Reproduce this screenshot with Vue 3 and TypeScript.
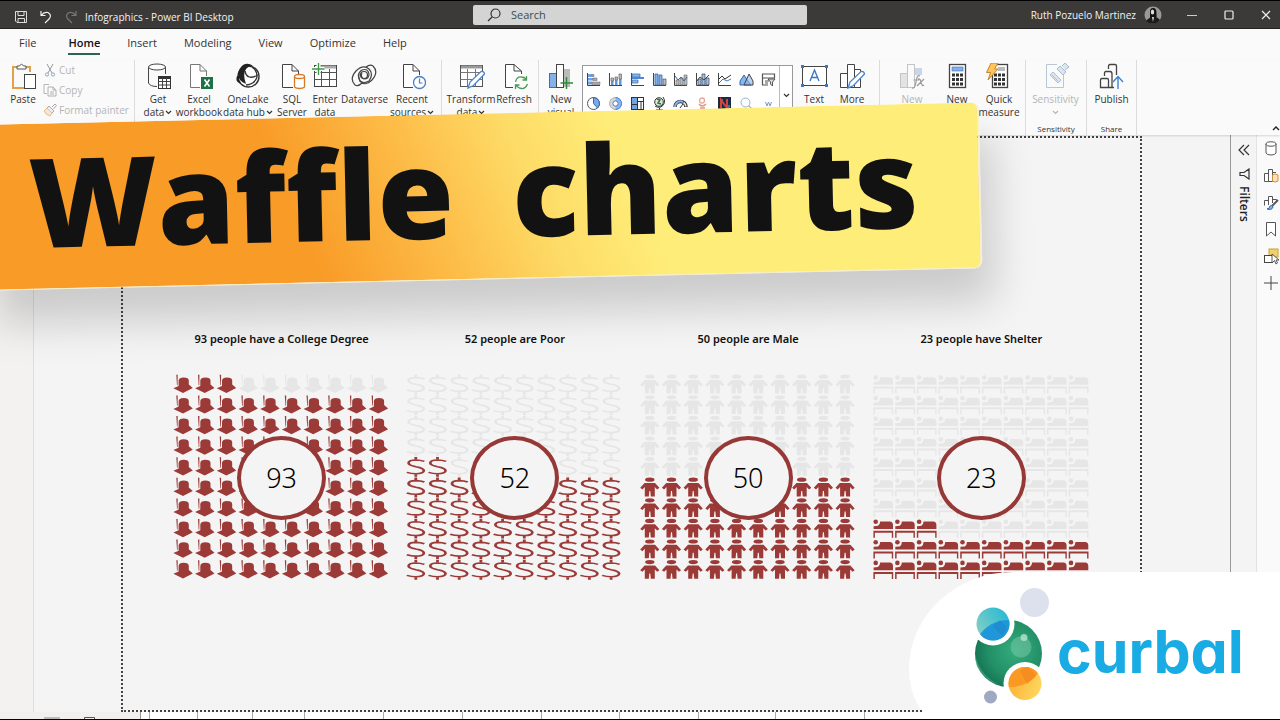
<script setup lang="ts">
interface RibbonItem {
  id: string
  icon: string
  lines: string[]
  width: number
  menu?: boolean
  disabled?: boolean
}
interface Chart {
  title: string
  value: number
  glyph: string
}

const tabs = ['File', 'Home', 'Insert', 'Modeling', 'View', 'Optimize', 'Help']

const icons: Record<string, string> = {
  paste: '<path d="M7 4H3V25H14" fill="none" stroke="#e2a04a" stroke-width="2"/><path d="M15 4H20V9" fill="none" stroke="#e2a04a" stroke-width="2"/><path d="M7 6V3H9.500Q11.500-.5 13.500 3H16V6Z" fill="#fff" stroke="#555"/><rect x="14.500" y="11.500" width="11" height="14" fill="#fff" stroke="#444"/>',
  getdata: '<path d="M3.500 4V20Q5 23.500 12 23.500M20.500 4V11" fill="none" stroke="#444"/><ellipse cx="12" cy="4" rx="8.500" ry="3" fill="#fff" stroke="#444"/><rect x="13.500" y="13.500" width="12" height="12" fill="#fff" stroke="#333"/><path d="M13.500 15H25.500" stroke="#333" stroke-width="2"/><path d="M13.500 18.500H25.500M13.500 22H25.500M17.500 15V25M21.500 15V25" stroke="#444"/>',
  excel: '<path d="M14 24.500H4.500V1.500H14L20.500 8V13M14 1.500V8H20.500" fill="#fff" stroke="#777"/><rect x="15" y="14" width="12" height="12" fill="#1e7145"/><path d="M18.500 16.500L23.500 23.500M23.500 16.500L18.500 23.500" stroke="#fff" stroke-width="1.600"/>',
  onelake: '<circle cx="13.500" cy="13.500" r="10.500" fill="#fff" stroke="#333" stroke-width="1.400"/><path d="M8 2Q13-1 18 3Q12 3 10 8Q8 13 11 21Q3 18 3 11Q4 5 8 2Z" fill="#222"/><path d="M2 13Q0 18 4 20L6 21Q3 17 4 13Z" fill="#222"/><path d="M10 8Q12 18 23 12M17 4Q22 7 22 14Q20 21 11 22" fill="none" stroke="#333" stroke-width="1.300"/>',
  sql: '<path d="M14 24.500H3.500V1.500H13L19.500 8V11M13 1.500V8H19.500" fill="#fff" stroke="#444"/><path d="M15.500 14V24Q17 25.500 20.500 25.500Q24 25.500 25.500 24V14" fill="#fff" stroke="#d77a28" stroke-width="1.300"/><ellipse cx="20.500" cy="13.500" rx="5" ry="2" fill="#fff" stroke="#d77a28" stroke-width="1.300"/>',
  enter: '<rect x="2.500" y="2.500" width="22" height="21" fill="#fff" stroke="#444"/><path d="M8 4H24" stroke="#aaa" stroke-width="3"/><path d="M2.500 9.500H24.500M2.500 16.500H24.500M9.500 6V23.500M17.500 6V23.500" stroke="#555"/><path d="M6.500 0V12M0 6H12.500" stroke="#fafafa" stroke-width="4"/><path d="M6.500 0V12M0 6H12.500" stroke="#3f9b4b" stroke-width="1.300"/>',
  dataverse: '<g fill="none" stroke="#444" stroke-width="1.200"><path d="M22 3Q28 9 21 17Q14 24 9 18Q5 11 11 7Q17 5 18 11Q18 16 13 16Q9 14 11 10"/><path d="M4 22Q-2 16 5 8Q12 1 18 6Q23 11 18 18Q13 21 9 18Q7 14 8 11"/><path d="M22 3Q19 1 15 4M4 22Q7 24 11 20"/><circle cx="13" cy="12" r="3.500"/></g>',
  recent: '<path d="M14 24.500H4.500V1.500H14L20.500 8V12M14 1.500V8H20.500" fill="#fff" stroke="#444"/><circle cx="20.500" cy="19.500" r="6" fill="#fff" stroke="#4a7fc1" stroke-width="1.300"/><path d="M20.500 15.500V20H23.500" fill="none" stroke="#4a7fc1" stroke-width="1.200"/>',
  transform: '<rect x="2.500" y="2.500" width="22" height="21" fill="#fff" stroke="#555"/><path d="M3 4H24" stroke="#999" stroke-width="3"/><path d="M2.500 9.500H24.500M2.500 16.500H24.500M9.500 6V23.500M17.500 6V23.500" stroke="#777"/><path d="M10 25L12 19L23 8.500Q26 8 26.500 11L15.500 22.500Z" fill="#fff" stroke="#4a84cc" stroke-width="1.300"/>',
  refresh: '<path d="M12 24.500H4.500V1.500H13L20.500 8V11M13 1.500V8H20.500" fill="#fff" stroke="#444"/><g transform="translate(1.500 0)" fill="none" stroke="#4c9b55" stroke-width="1.300"><path d="M13 19Q14 13.500 19 14Q22 14 24 17M24 13V17H20M25 21Q23 26 19 25.500Q15 25 13.500 22M13 26V22H17"/></g>',
  newvisual: '<rect x="1.500" y="10.500" width="7" height="14" fill="#85b1ea" stroke="#3a6db5"/><rect x="15" y="6" width="7" height="18" fill="#bbb"/><rect x="8.500" y="1.500" width="7" height="23" fill="#fff" stroke="#444"/><path d="M18.500 14V26M12.500 20H25" stroke="#2f8a3c" stroke-width="1.500"/>',
  text: '<rect x="1.500" y="3.500" width="24" height="19" fill="#fff" stroke="#444"/><path d="M9 18L13.500 7L18 18M10.500 14.500H16.500" fill="none" stroke="#3a78c4" stroke-width="1.400"/><path d="M0 2h3v3H0zM24 2h3v3H24zM0 21h3v3H0zM24 21h3v3H24z" fill="#3a78c4"/>',
  more: '<path d="M1.500 10.500H8.500V24.500H1.500ZM8.500 1.500H15.500V24.500H8.500ZM15.500 6.500H21.500V24.500H15.500Z" fill="#fff" stroke="#444"/><path d="M9 25L11 19L22 8.500Q25 8 25.500 11L14.500 22.500Z" fill="#fff" stroke="#4a84cc" stroke-width="1.300"/>',
  measurefx: '<rect x="1.500" y="10.500" width="7" height="14" fill="#e3e3e3" stroke="#c4c4c4"/><rect x="15" y="5" width="8" height="7" fill="#c8d6e8"/><rect x="8.500" y="1.500" width="7" height="23" fill="#fafafa" stroke="#c4c4c4"/><path d="M13 25Q16 26 17 19Q18 11 21 13M14.500 17H20M19 16Q21 15 22 19Q23 24 25 22M25 16L18 23" fill="none" stroke="#999" stroke-width="1.200"/>',
  calc: '<rect x="5.500" y="1.500" width="16" height="23" fill="#fff" stroke="#444" stroke-width="1.300"/><rect x="8" y="4" width="11" height="4" fill="#85b1ea" stroke="#3a6db5" stroke-width=".6"/><path d="M8 10.500h3v3H8zM12 10.500h3v3h-3zM16 10.500h3v3h-3zM8 15h3v3H8zM12 15h3v3h-3zM16 15h3v3h-3zM8 19.500h3v3H8zM12 19.500h3v3h-3zM16 19.500h3v3h-3z" fill="#333"/>',
  quick: '<rect x="6.500" y="1.500" width="15" height="23" fill="#fff" stroke="#444" stroke-width="1.300"/><rect x="12" y="4" width="7" height="4" fill="#bbb"/><path d="M8 10.500h3v3H8zM12 10.500h3v3h-3zM16 10.500h3v3h-3zM8 15h3v3H8zM12 15h3v3h-3zM16 15h3v3h-3zM8 19.500h3v3H8zM12 19.500h3v3h-3zM16 19.500h3v3h-3z" fill="#333"/><path d="M5 0H12L8.500 6H12L2 17L4.500 9.500H.5Z" fill="#ffc45c" stroke="#c9822a"/>',
  sensitivity: '<path d="M15 1.500H4.500V24.500H21.500V12" fill="none" stroke="#b9c6d4"/><path d="M8 12L11 9L19 17L16 20Z" fill="#dce4ee" stroke="#b0bfd0"/><path d="M15 6L18 3L24 9L21 12ZM20 3L23 0L27 4L23 7" fill="#dce4ee" stroke="#a9bbd0"/><path d="M10 12L16 18" stroke="#b0bfd0"/>',
  publish: '<path d="M10.500 6V3Q10.500 1.500 12 1.500H17Q18.500 1.500 18.500 3V12M14 14V11Q14 8.500 12 8.500H8Q6.500 8.500 6.500 10V13M2.500 17Q2.500 15.500 4 15.500H9Q10.500 15.500 10.500 17V24.500H2.500ZM10.500 24.500H16M14 14V24" fill="none" stroke="#444" stroke-width="1.300"/><path d="M20 26V14M15 19L20 13.500L25 19" fill="none" stroke="#3f83cc" stroke-width="1.400"/>',
  cut: '<path d="M4 1L9 10M10 1L5 10" fill="none" stroke="#9a9a9a"/><circle cx="4" cy="11.500" r="1.600" fill="none" stroke="#8fa8c4"/><circle cx="10" cy="11.500" r="1.600" fill="none" stroke="#8fa8c4"/>',
  copy: '<path d="M4 10.500H1V1.500H6" fill="none" stroke="#b5b5b5"/><path d="M5 4H10L13 7V13H5ZM10 4V7H13M7 9H11M7 11H11" fill="none" stroke="#b0b0b0"/>',
  brush: '<path d="M9 4L12 1L13.500 2.500L10.500 6" fill="none" stroke="#a8a8a8"/><path d="M6 3L11 8L9 10L4 5Z" fill="#eee" stroke="#aaa"/><path d="M4 5L1 8Q3 12 7 13L9 10" fill="#f9e5cc" stroke="#e2bb8c"/>',
}

const dataItems: RibbonItem[] = [
  { id: 'get', icon: 'getdata', lines: ['Get', 'data'], width: 38, menu: true },
  { id: 'excel', icon: 'excel', lines: ['Excel', 'workbook'], width: 44 },
  { id: 'onelake', icon: 'onelake', lines: ['OneLake', 'data hub'], width: 54, menu: true },
  { id: 'sql', icon: 'sql', lines: ['SQL', 'Server'], width: 34 },
  { id: 'enter', icon: 'enter', lines: ['Enter', 'data'], width: 32 },
  { id: 'dataverse', icon: 'dataverse', lines: ['Dataverse'], width: 47 },
  { id: 'recent', icon: 'recent', lines: ['Recent', 'sources'], width: 48, menu: true },
]
const queryItems: RibbonItem[] = [
  { id: 'transform', icon: 'transform', lines: ['Transform', 'data'], width: 52, menu: true },
  { id: 'refresh', icon: 'refresh', lines: ['Refresh'], width: 34 },
]
const calcItems: RibbonItem[] = [
  { id: 'visualcalc', icon: 'measurefx', lines: ['New'], width: 40, disabled: true },
  { id: 'measure', icon: 'calc', lines: ['New', 'measure'], width: 50 },
  { id: 'quick', icon: 'quick', lines: ['Quick', 'measure'], width: 34 },
]
const insertItems: RibbonItem[] = [
  { id: 'text', icon: 'text', lines: ['Text', 'box'], width: 42 },
  { id: 'more', icon: 'more', lines: ['More', 'visuals'], width: 34 },
]
const newVisual: RibbonItem[] = [
  { id: 'newvisual', icon: 'newvisual', lines: ['New', 'visual'], width: 42 },
]
const pasteItem: RibbonItem[] = [{ id: 'paste', icon: 'paste', lines: ['Paste'], width: 36 }]
const sensitivityItem: RibbonItem[] = [
  { id: 'sens', icon: 'sensitivity', lines: ['Sensitivity', ''], width: 59, menu: true, disabled: true },
]
const publishItem: RibbonItem[] = [{ id: 'publish', icon: 'publish', lines: ['Publish'], width: 49 }]

interface Group {
  id: string
  items: RibbonItem[]
  caption?: string
  clipboard?: boolean
  gallery?: boolean
  after?: RibbonItem[]
}
const groups: Group[] = [
  { id: 'clipboard', items: pasteItem, clipboard: true },
  { id: 'data', items: dataItems },
  { id: 'queries', items: queryItems },
  { id: 'insert', items: newVisual, gallery: true, after: insertItems },
  { id: 'calc', items: calcItems },
  { id: 'sensitivity', items: sensitivityItem, caption: 'Sensitivity' },
  { id: 'share', items: publishItem, caption: 'Share' },
]
const clipActions = [
  { icon: 'cut', label: 'Cut' },
  { icon: 'copy', label: 'Copy' },
  { icon: 'brush', label: 'Format painter' },
]

const axis = '<path d="M1.500 1V13.500H14" fill="none" stroke="#444"/>'
const gallery: { name: string; art: string }[] = [
  { name: 'Stacked bar', art: axis + '<path d="M2 2h4v3H2zM2 9.500h4v3H2zM2 6h5v2.500H2z" fill="#6ea3e6"/><path d="M6 2.500h2v2H6zM7 6h4v2.500H7zM6 10h8v2.500H6z" fill="#aaa" stroke="#666" stroke-width=".5"/>' },
  { name: 'Stacked column', art: axis + '<path d="M3 9h2.500v4H3zM7 8h2.500v5H7zM11 7h2.500v6h-2.500z" fill="#5f98e0"/><path d="M3 6h2.500v3H3zM7 5h2.500v3H7zM11 2h2.500v5h-2.500z" fill="#bbb" stroke="#555" stroke-width=".6"/>' },
  { name: 'Clustered bar', art: axis + '<path d="M2 2h8v3H2zM2 8h6v3H2z" fill="#8ab6ee" stroke="#3568ac" stroke-width=".7"/><path d="M2 5h12v2H2z" fill="#4f87d0"/>' },
  { name: 'Clustered column', art: axis + '<path d="M3 2h3v11H3zM7 3h3v10H7z" fill="#85b1ea" stroke="#3568ac" stroke-width=".8"/><path d="M11 7h3v6h-3z" fill="#bbb" stroke="#555" stroke-width=".7"/>' },
  { name: 'Line and stacked column', art: axis + '<path d="M3 8h3v5H3zM7 6h3v7H7zM11 3h3v10h-3z" fill="#bbb" stroke="#666" stroke-width=".6"/><path d="M2 4L5 8L8 5L11 9L14 5" fill="none" stroke="#3568ac"/>' },
  { name: 'Line and clustered column', art: axis + '<path d="M3 7h3v6H3zM7 2h3v11H7zM11 6h3v7h-3z" fill="#9fc0eb" stroke="#444" stroke-width=".7"/><path d="M2 9L5 5L9 8L14 3" fill="none" stroke="#444"/>' },
  { name: 'Line', art: axis + '<path d="M2 7L5 4L8 7L14 3" fill="none" stroke="#333"/><path d="M2 11L6 7L10 9L14 7" fill="none" stroke="#3f7ccc"/>' },
  { name: 'Area', art: '<path d="M1 13V9L5 3L9 9L12 13Z" fill="#8ab6ee" stroke="#3568ac"/><path d="M5 13L10 2L14 9V13Z" fill="#8ab6ee" stroke="#444" fill-opacity=".6"/>' },
  { name: 'Slicer', art: '<path d="M1.500 2H13.500V6H1.500ZM1.500 6V13H7M4 9H8M4 11H7" fill="none" stroke="#555" stroke-width="1.200"/><path d="M7 7H14L11.500 10V14L9.500 12V10Z" fill="#ddd" stroke="#333" stroke-width=".8"/>' },
  { name: 'Pie', art: '<circle cx="7.500" cy="7.500" r="6" fill="#fff" stroke="#555"/><path d="M7.500 7.500V1.500A6 6 0 0 1 11.500 12Z" fill="#78a9e8" stroke="#3568ac"/>' },
  { name: 'Donut', art: '<circle cx="7.500" cy="7.500" r="6" fill="#d6d6d6" stroke="#999" stroke-width=".7"/><path d="M7.500 1.500A6 6 0 0 1 7.500 13.500" fill="#8ab6ee" stroke="#4b82cb"/><circle cx="7.500" cy="7.500" r="2.600" fill="#fff" stroke="#4b82cb"/>' },
  { name: 'Treemap', art: '<rect x="1.500" y="1.500" width="12" height="12" fill="#fff" stroke="#333"/><path d="M2 2h5v6H2zM2 9h5v4H2z" fill="#6ea3e6"/><path d="M7.500 1.500V13.500M1.500 8.500H7.500M7.500 5.500H13.500M11 5.500V13.500" stroke="#333"/>' },
  { name: 'Map', art: '<circle cx="7" cy="6" r="4.300" fill="#dfe9df" stroke="#333"/><path d="M5 3L8 4L6 7L9 8" fill="none" stroke="#2f7a3c" stroke-width="1.500"/><path d="M11 1Q15 7 9 11Q5 12 3 10M7.500 12V14M4 14H11" fill="none" stroke="#333"/>' },
  { name: 'Gauge', art: '<path d="M2 11A5.500 5.500 0 0 1 13 11" fill="none" stroke="#333" stroke-width="3.500"/><path d="M2 11A5.500 5.500 0 0 1 10 6" fill="none" stroke="#8ab6ee" stroke-width="2"/><path d="M10.500 6.500A5.500 5.500 0 0 1 13 10.500" fill="none" stroke="#eee" stroke-width="1.500"/><path d="M7 12L10 8" stroke="#333"/>' },
  { name: 'Card', art: '<circle cx="7" cy="4.500" r="2.500" fill="none" stroke="#e8a89a" stroke-width="1.300"/><path d="M4 8Q7 12 11 8M5 12H10" fill="none" stroke="#e69080" stroke-width="1.300"/>' },
  { name: 'Matrix', art: '<rect x="1" y="1" width="13" height="13" fill="#1c2a44"/><path d="M3 3h3v3H3zM9 9h4v3H9z" fill="#3f6db0"/><path d="M4 12V4L10 12V3" fill="none" stroke="#d6453c" stroke-width="2"/>' },
  { name: 'Search visual', art: '<circle cx="6.500" cy="6.500" r="4.500" fill="none" stroke="#8fb5d8"/><path d="M9.500 9.500L13 13" stroke="#8fb5d8" stroke-width="1.300"/>' },
  { name: 'Word visual', art: '<path d="M4.500 6L6 10L7.500 6L9 10L10.500 6" fill="none" stroke="#7d9cc4"/>' },
]

const glyphs: Record<string, string> = {
  hat: '<path d="M3.300 .8H4.700L4.600 11L4 11.500Z"/><path d="M5.600 12V6.500Q6 3.400 10.600 3.400Q15.800 3.400 15.800 6.500V10.500L19.800 14L10 19L.4 14.300Z"/>',
  dollar: '<path d="M8.400 .6H11.200V3.200H8.400ZM8.400 17.800H11.200V20.400H8.400Z"/><g transform="scale(1.700 1)" fill="none" stroke="currentColor"><path d="M10.800 5Q8.500 3.600 5.800 3.600Q1.500 3.700 1.500 6.600Q1.600 9 5.800 10.300Q10.500 11.600 10.500 14.400Q10.300 17.300 5.800 17.300Q3 17.300 .5 16" stroke-width="1.600"/></g>',
  man: '<ellipse cx="9.800" cy="2.700" rx="4.700" ry="2.100"/><path d="M4.600 6H15L19.400 10.800L17.200 12.400L14.800 10V19.400H10.800L10.300 14H9.300L8.800 19.400H4.800V10L2.400 12.400L.2 10.800Z"/>',
  bed: '<circle cx="2.700" cy="3.500" r="2.300"/><path d="M7.200 3.200H16.800Q20 3.400 20 6.500V10.800H.6V8L5 7.600Q7 6.500 7.200 3.200Z"/><path d="M.4 19.600V12.600H20.200V19.600H18.800V14.600H1.900V19.600Z"/>',
}
const charts: Chart[] = [
  { title: '93 people have a College Degree', value: 93, glyph: 'hat' },
  { title: '52 people are Poor', value: 52, glyph: 'dollar' },
  { title: '50 people are Male', value: 50, glyph: 'man' },
  { title: '23 people have Shelter', value: 23, glyph: 'bed' },
]
const cells = Array.from({ length: 100 }, (_, i) => {
  const row = Math.floor(i / 10)
  const col = i % 10
  return { row, col, rank: (9 - row) * 10 + col, place: `translate(${col * 21.7} ${row * 20.6})` }
})

const panes = [
  { name: 'Data', art: '<path d="M3 4V13Q4 15 8 15Q12 15 13 13V4" fill="#fff" stroke="#555"/><ellipse cx="8" cy="4" rx="5" ry="2.200" fill="#fff" stroke="#555"/>' },
  { name: 'Build', art: '<path d="M1.500 6.500H5.500V14.500H1.500ZM5.500 2.500H9.500V14.500H5.500ZM9.500 5.500H13" fill="#fff" stroke="#555"/><path d="M9.500 8V14Q12 16 15 14V8Q12 6 9.500 8Z" fill="#ffe2b5" stroke="#cf8e3d"/>' },
  { name: 'Format', art: '<path d="M1.500 11.500V6.500H5.500V11M5.500 10V2.500H9.500V9M9.500 5.500H13.500V7" fill="#fff" stroke="#555"/><path d="M15 6L9 12" stroke="#555" stroke-width="1.800"/><path d="M4 15Q7 15 6.500 12.500Q9 10 10 13Q9 16.500 4 15Z" fill="#85b1ea" stroke="#3568ac"/>' },
  { name: 'Bookmarks', art: '<path d="M3.500 1.500H12.500V15L8 11L3.500 15Z" fill="#fff" stroke="#555"/>' },
  { name: 'Selection', art: '<rect x="6" y="1" width="9" height="8" fill="#f3cf6b" stroke="#c9a03a"/><rect x="1.500" y="7.500" width="8" height="7" fill="#fff" stroke="#444"/><path d="M9 6V15L11.500 12.500L13 16L14.500 15L13 12H16Z" fill="#fff" stroke="#444" stroke-width=".9"/>' },
  { name: 'Add pane', art: '<path d="M8 1V15M1 8H15" stroke="#444"/>' },
]
const pageTabs = [9, 48, 55, 52, 79, 79, 79, 78, 79, 77, 89]
</script>

<template>
  <div class="app">
    <header class="titlebar">
      <div class="quick">
        <button aria-label="Save">
          <svg width="14" height="14" viewBox="0 0 14 14" fill="none" stroke="#ddd"><path d="M1.500 1.500H12.500V12.500H3L1.500 11ZM4 1.500V5.500H10V1.500M4 12.500V8.500H10.500V12.500" /></svg>
        </button>
        <button aria-label="Undo">
          <svg width="14" height="14" viewBox="0 0 14 14" fill="none" stroke="#eee" stroke-width="1.200"><path d="M2 1V5.500H6.500M2.300 5.300Q5 1.500 9 2.500Q13 5 10.500 8.500L6 13" /></svg>
        </button>
        <button aria-label="Redo">
          <svg width="14" height="14" viewBox="0 0 14 14" fill="none" stroke="#777" stroke-width="1.200"><path d="M12 1V5.500H7.500M11.700 5.300Q9 1.500 5 2.500Q1 5 3.500 8.500L8 13" /></svg>
        </button>
        <span class="doc">Infographics - Power BI Desktop</span>
      </div>
      <label class="search">
        <svg width="14" height="14" viewBox="0 0 14 14" fill="none" stroke="#333" stroke-width="1.200"><circle cx="8.500" cy="5.500" r="4.500" /><path d="M5.300 8.800L1 13" /></svg>
        <input type="text" placeholder="Search" aria-label="Search">
      </label>
      <div class="account">
        <span>Ruth Pozuelo Martinez</span>
        <svg class="avatar" width="18" height="18" viewBox="0 0 18 18"><circle cx="9" cy="9" r="8.500" fill="#999" /><path d="M6 16V6Q6 2 9 2Q12.500 2 12.500 7V16L9 17.500Z" fill="#111" /><ellipse cx="8.500" cy="6" rx="1.700" ry="2.500" fill="#ddd" /><path d="M2 15Q6 10 9 12Q13 10 16 14Q13 17.500 9 17.500Q5 17.500 2 15Z" fill="#1b1b1b" /><path d="M8 11L9 16L10 11Z" fill="#ddd" /></svg>
        <button class="win" aria-label="Minimize"><svg width="10" height="10" viewBox="0 0 10 10" stroke="#ccc"><path d="M0 5.500H10" /></svg></button>
        <button class="win" aria-label="Maximize"><svg width="10" height="10" viewBox="0 0 10 10" fill="none" stroke="#eee" stroke-width="1.200"><rect x="1" y="1" width="8" height="8" rx="1" /></svg></button>
        <button class="win" aria-label="Close"><svg width="10" height="10" viewBox="0 0 10 10" stroke="#eee" stroke-width="1.200"><path d="M1 1L9 9M9 1L1 9" /></svg></button>
      </div>
    </header>

    <nav class="tabs">
      <button v-for="t in tabs" :key="t" :class="['tab', { active: t === 'Home' }]">{{ t }}</button>
    </nav>

    <section class="ribbon">
      <div v-for="g in groups" :key="g.id" :class="['group', g.id]">
        <div class="row">
          <button v-for="it in g.items" :key="it.id" class="item" :disabled="it.disabled" :style="{ width: it.width + 'px' }">
            <svg class="big" viewBox="0 0 27 27" v-html="icons[it.icon]" />
            <span v-for="(l, i) in it.lines" :key="i" class="line">{{ l }}<svg v-if="it.menu && i === 1" class="chev" viewBox="0 0 7 5"><path d="M1 1L3.500 3.500L6 1" /></svg></span>
          </button>
          <div v-if="g.clipboard" class="clips">
            <button v-for="c in clipActions" :key="c.label" disabled>
              <svg width="14" height="14" viewBox="0 0 14 14" v-html="icons[c.icon]" />{{ c.label }}
            </button>
          </div>
          <template v-if="g.gallery">
            <div class="gallery">
              <div class="visuals">
                <button v-for="v in gallery" :key="v.name" :aria-label="v.name">
                  <svg width="15" height="15" viewBox="0 0 15 15" v-html="v.art" />
                </button>
              </div>
              <button class="expand" aria-label="More visuals"><svg class="chev" viewBox="0 0 7 5"><path d="M1 1L3.500 3.500L6 1" /></svg></button>
            </div>
            <button v-for="it in g.after" :key="it.id" class="item" :style="{ width: it.width + 'px' }">
              <svg class="big" viewBox="0 0 27 27" v-html="icons[it.icon]" />
              <span v-for="(l, i) in it.lines" :key="i" class="line">{{ l }}</span>
            </button>
          </template>
        </div>
        <div class="caption">{{ g.caption }}</div>
      </div>
      <button class="collapse" aria-label="Collapse ribbon"><svg width="8" height="6" viewBox="0 0 8 6" fill="none" stroke="#222" stroke-width="1.400"><path d="M1 5L4 2L7 5" /></svg></button>
    </section>

    <main class="workspace">
      <aside class="left-rail" />
      <div class="canvas">
        <div class="page">
          <article v-for="c in charts" :key="c.glyph" class="chart">
            <h2>{{ c.title }}</h2>
            <div class="waffle">
              <svg viewBox="0 0 217 206" width="217" height="206">
                <g v-for="cell in cells" :key="cell.rank" :transform="cell.place" :class="cell.rank < c.value ? 'on' : 'off'" v-html="glyphs[c.glyph]" />
              </svg>
              <div class="total">{{ c.value }}</div>
            </div>
          </article>
        </div>
      </div>
      <aside class="filters">
        <button aria-label="Expand filters"><svg width="12" height="12" viewBox="0 0 12 12" fill="none" stroke="#333" stroke-width="1.200"><path d="M6 1L1 6L6 11M11 1L6 6L11 11" /></svg></button>
        <svg width="12" height="12" viewBox="0 0 12 12" fill="none" stroke="#333" stroke-width="1.200"><path d="M11 1V11L6 7.500H2V4.500H6Z" /></svg>
        <span>Filters</span>
      </aside>
      <aside class="right-rail">
        <button v-for="p in panes" :key="p.name" :aria-label="p.name"><svg width="16" height="17" viewBox="0 0 16 17" v-html="p.art" /></button>
      </aside>
    </main>

    <footer class="pages">
      <div class="views">
        <svg width="60" height="7" viewBox="0 0 60 7" fill="none"><path d="M1 6H17" stroke="#bbb" stroke-width="2" /><path d="M41.500 7V5.500H51.500V7" stroke="#555" /></svg>
      </div>
      <span v-for="(w, i) in pageTabs" :key="i" class="ptab" :style="{ width: w + 'px' }" />
    </footer>

    <div class="banner"><h1><span>Waffle</span><span>charts</span></h1></div>

    <div class="brand">
      <svg width="80" height="120" viewBox="0 0 80 120">
        <defs>
          <radialGradient id="green" cx=".6" cy=".45" r=".65"><stop offset="0" stop-color="#35ad7d" /><stop offset=".6" stop-color="#239068" /><stop offset="1" stop-color="#136f50" /></radialGradient>
          <linearGradient id="teal" x1="0" y1=".8" x2="1" y2=".2"><stop offset="0" stop-color="#86d0c3" /><stop offset="1" stop-color="#25b8d6" /></linearGradient>
          <linearGradient id="amber" x1="0" y1="0" x2="1" y2=".4"><stop offset="0" stop-color="#f9a82c" /><stop offset="1" stop-color="#ffd45c" /></linearGradient>
          <clipPath id="tealClip"><circle cx="23" cy="38" r="16.500" /></clipPath>
          <clipPath id="amberClip"><circle cx="55" cy="97.500" r="16.500" /></clipPath>
        </defs>
        <circle cx="64.500" cy="16.500" r="14.500" fill="#dde1ee" />
        <circle cx="38.500" cy="67.500" r="33.500" fill="url(#green)" />
        <path d="M5 68Q10 90 30 99Q12 94 6 78Z" fill="#45ad86" opacity=".6" />
        <circle cx="51" cy="61" r="10.500" fill="#7bcaa8" opacity=".5" />
        <circle cx="54" cy="51.500" r="3.500" fill="#b5e3cf" opacity=".8" />
        <circle cx="23" cy="38" r="21.500" fill="#fff" />
        <circle cx="23" cy="38" r="16.500" fill="url(#teal)" />
        <g clip-path="url(#tealClip)"><path d="M8 51Q20 33 41 34V56H8Z" fill="#2196d9" /><path d="M23 40L32 50L37 42L30 34Z" fill="#1b83cc" opacity=".5" /></g>
        <circle cx="55" cy="97.500" r="21.500" fill="#fff" />
        <circle cx="55" cy="97.500" r="16.500" fill="url(#amber)" />
        <g clip-path="url(#amberClip)"><path d="M37 101Q58 102 69 86V78H37Z" fill="#fb9a22" /><path d="M50 85L57 98L66 90L58 80Z" fill="#f48620" opacity=".6" /></g>
        <circle cx="20.500" cy="111" r="6.500" fill="#a0a9c1" />
      </svg>
      <strong>curbal</strong>
    </div>
  </div>
</template>

<style>
body { margin: 0; background: #f4f4f4; }
</style>

<style scoped>
* { box-sizing: border-box; }
.app {
  position: relative;
  display: flex;
  flex-direction: column;
  min-height: 100vh;
  overflow: hidden;
  font-family: "Open Sans", "Noto Sans", sans-serif;
  font-size: 10px;
  color: #333;
  background: #f4f4f4;
}
button { padding: 0; border: 0; background: none; font: inherit; color: inherit; }
svg { display: block; flex: none; }

.titlebar {
  display: grid;
  grid-template-columns: 1fr 334px 1fr;
  align-items: center;
  height: 29px;
  border-top: 1px solid #000;
  border-bottom: 1px solid #222;
  background: #3b3a39;
  color: #f2f2f2;
}
.quick { display: flex; align-items: center; gap: 11px; padding: 4px 0 0 14px; }
.doc { margin-left: -4px; white-space: nowrap; line-height: 14px; }
.search {
  display: flex;
  align-items: center;
  gap: 10px;
  height: 20px;
  padding-left: 14px;
  border-radius: 2px;
  background: #d4d4d4;
}
.search input { flex: 1; min-width: 0; padding: 0; border: 0; background: none; outline: 0; font: inherit; font-size: 11px; color: #333; }
.search input::placeholder { color: #35504a; opacity: 1; }
.account { display: flex; align-items: center; justify-content: flex-end; padding-right: 9px; white-space: nowrap; }
.avatar { margin: 0 25px 0 8px; }
.win { width: 10px; margin-right: 27px; }
.win:last-child { margin-right: 0; }

.tabs { display: flex; gap: 27px; height: 31px; padding: 4px 19px 0; background: #fafafa; }
.tab { height: 22px; line-height: 20px; font-size: 11px; border-bottom: 2px solid transparent; }
.tab:first-child { margin-right: 5px; }
.tab.active { font-weight: 600; color: #111; border-bottom-color: #2b6354; }

.ribbon {
  position: relative;
  display: flex;
  height: 75px;
  background: #fafafa;
  box-shadow: 0 1px 2px rgba(0, 0, 0, .15);
  z-index: 1;
}
.group { display: flex; flex-direction: column; justify-content: space-between; border-right: 1px solid #dcdcdc; }
.clipboard { width: 135px; padding-left: 5px; }
.data { width: 307px; padding-left: 4px; }
.queries { width: 97px; padding-left: 3px; }
.insert { width: 341px; padding-left: 1px; }
.calc { width: 146px; padding-left: 12px; }
.sensitivity { width: 61px; }
.share { width: 50px; }
.row { display: flex; align-items: flex-start; padding-top: 3px; height: 60px; }
.item { display: flex; flex-direction: column; align-items: center; flex: none; white-space: nowrap; }
.item:disabled, .clips button { color: #b5b5b5; }
.big { width: 27px; height: 27px; margin-bottom: 3px; }
.line { display: flex; align-items: center; gap: 1px; height: 13px; line-height: 13px; }
.chev { width: 7px; height: 5px; fill: none; stroke: currentColor; stroke-width: 1.200; }
.clips { display: flex; flex-direction: column; margin-top: -3px; padding-left: 2px; }
.clips button { display: flex; align-items: center; gap: 2px; height: 20px; white-space: nowrap; }
.gallery { display: flex; width: 211px; height: 60px; margin-top: 2px; border: 1px solid #999; background: #fff; }
.visuals { display: grid; grid-template-columns: repeat(9, 1fr); grid-auto-rows: 24px; flex: 1; padding-top: 1px; }
.visuals button { display: grid; place-items: center; }
.expand { display: grid; place-items: center; width: 13px; border-left: 1px solid #bbb; }
.caption { height: 12px; font-size: 8px; line-height: 12px; text-align: center; }
.collapse { margin: auto 0 4px auto; }

.workspace { display: flex; flex: 1; }
.left-rail { width: 34px; border-right: 1px solid #dedede; background: #f3f2f1; }
.canvas { display: flex; flex: 1; padding: 1px 88px 0 87px; }
.page {
  display: grid;
  grid-template-columns: repeat(4, 1fr);
  align-content: start;
  flex: 1;
  padding: 193px 42px 0;
  border: 2px dotted #444;
}
.chart { display: flex; flex-direction: column; align-items: center; gap: 27px; }
.chart h2 { margin: 0; font-family: "Noto Sans", "Open Sans", sans-serif; font-size: 11px; line-height: 16px; font-weight: 600; color: #111; white-space: nowrap; }
.waffle { position: relative; }
.on { color: #9b3a37; fill: #9b3a37; }
.off { color: #e6e6e6; fill: #e6e6e6; }
.total {
  position: absolute;
  inset: 62px 64px 60px;
  display: grid;
  place-items: center;
  border: 4px solid #963835;
  border-radius: 50%;
  background: #f4f4f4;
  font-family: "Noto Sans", "Open Sans", sans-serif;
  font-size: 27px;
  line-height: 32px;
  font-weight: 350;
  color: #000;
}

.filters {
  display: flex;
  flex-direction: column;
  align-items: center;
  gap: 12px;
  width: 27px;
  padding-top: 9px;
  border-left: 1px solid #999;
  border-right: 1px solid #e3e3e3;
}
.filters span { writing-mode: vertical-rl; margin-top: -6px; font-size: 12px; line-height: 14px; font-weight: 600; color: #222; }
.right-rail { display: flex; flex-direction: column; align-items: center; gap: 10px; width: 23px; padding: 5px 0 0 4px; background: #fafafa; }
.right-rail button { width: 16px; height: 17px; }

.pages { display: flex; height: 8px; border-bottom: 1px solid #000; background: #fff; }
.views { width: 141px; padding-left: 43px; border-right: 1px solid #999; background: #f1f0ef; }
.ptab { border-right: 1px solid #aaa; }

.banner {
  position: absolute;
  z-index: 2;
  top: 125px;
  left: -20px;
  width: calc(76.500% + 20px);
  height: 166px;
  display: flex;
  align-items: center;
  padding: 0 0 14px 47px;
  border-right: 2px solid #f6f0c8;
  border-bottom: 1px solid #f6ecc0;
  border-radius: 0 8px 8px 0;
  background: linear-gradient(68deg, #f99b27 32%, #fdc04b 46%, #fddb66 55%, #ffed79 65%);
  box-shadow: 12px 34px 42px rgba(0, 0, 0, .17);
  transform: rotate(-1.300deg);
  transform-origin: 0 0;
}
h1 { display: flex; gap: 58px; margin: 0; font-family: "Open Sans", "Noto Sans", sans-serif; font-size: 124px; line-height: 150px; font-weight: 800; color: #121212; font-variant-ligatures: none; white-space: nowrap; }

.brand {
  position: absolute;
  z-index: 3;
  right: 0;
  bottom: 1px;
  display: flex;
  align-items: center;
  gap: 7px;
  width: 371px;
  height: 147px;
  padding-left: 61px;
  border-radius: 105px 0 0 30px / 98px 0 0 50px;
  background: #fff;
}
.brand strong { padding-top: 12px; font-family: Inter, "Open Sans", sans-serif; font-feature-settings: "cv11"; font-size: 59px; line-height: 70px; font-weight: 700; color: #19abe3; }
</style>
